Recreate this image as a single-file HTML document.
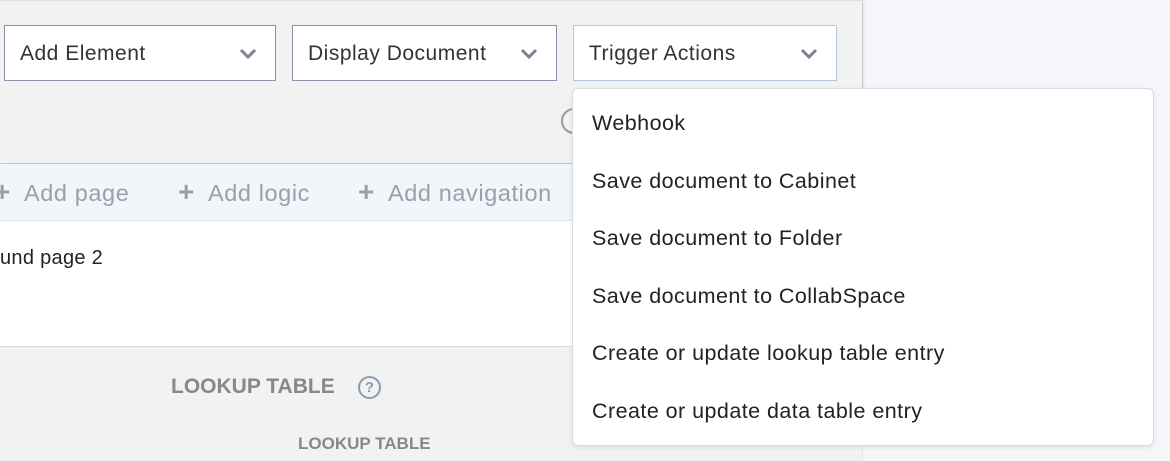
<!DOCTYPE html>
<html><head><style>
body{margin:0;width:1170px;height:461px;overflow:hidden;background:#f4f6f9;font-family:"Liberation Sans",sans-serif;position:relative}
.panel{position:absolute;left:0;top:0;width:862px;height:461px;background:#f2f2f2;border-right:1px solid #e4e6ea}
.top{position:absolute;left:0;top:0;width:862px;height:162px;background:#f2f2f2;border-top:1px solid #e0e0e0;box-shadow:0 2px 4px rgba(0,0,0,.25)}
.dd{position:absolute;top:25px;height:56px;background:#fff;border:1px solid #8e92aa;box-sizing:border-box;font-size:21px;letter-spacing:.5px;color:#333;line-height:56px;padding-left:15px}
.dd svg{position:absolute;right:18px;top:22px}
.bar{position:absolute;left:0;top:164px;width:862px;height:56px;background:#f2f5f9;border-bottom:1px solid #dde2e8;font-size:23.5px;letter-spacing:.6px;color:#9aa0ab;line-height:56px}
.bar span{position:absolute}
.bar b{font-size:28px;margin-right:13px;font-weight:bold}
.white{position:absolute;left:0;top:221px;width:862px;height:125px;background:#fff;border-bottom:1px solid #d6dbe2}
.menu{position:absolute;left:572px;top:88px;width:582px;height:358px;background:#fff;border:1px solid #d8dce2;border-radius:6px;box-sizing:border-box;box-shadow:0 2px 6px rgba(0,0,0,.08)}
.menu div{position:absolute;left:19px;font-size:21.5px;letter-spacing:.45px;color:#222}
</style></head><body>
<div class="panel"></div>
<div class="top"></div>
<div class="dd" style="left:4px;width:272px">Add Element<svg width="18" height="12" viewBox="0 0 18 12"><path d="M2 2l7 7 7-7" stroke="#7d8296" stroke-width="3" fill="none"/></svg></div>
<div class="dd" style="left:292px;width:265px">Display Document<svg width="18" height="12" viewBox="0 0 18 12"><path d="M2 2l7 7 7-7" stroke="#7d8296" stroke-width="3" fill="none"/></svg></div>
<div class="dd" style="left:573px;width:264px;border-color:#b3c7e0">Trigger Actions<svg width="18" height="12" viewBox="0 0 18 12"><path d="M2 2l7 7 7-7" stroke="#7d8296" stroke-width="3" fill="none"/></svg></div>
<div style="position:absolute;left:561px;top:108px;width:26px;height:26px;border:2px solid #999;border-radius:50%;box-sizing:border-box"></div>
<div class="bar"><span style="left:-6px"><b>+</b>Add page</span><span style="left:178px"><b>+</b>Add logic</span><span style="left:358px"><b>+</b>Add navigation</span></div>
<div class="white"><span style="position:absolute;left:0;top:26px;font-size:20px;letter-spacing:.3px;color:#222">und page 2</span></div>
<div style="position:absolute;left:171px;top:375px;font-size:21px;font-weight:bold;color:#888">LOOKUP TABLE</div>
<div style="position:absolute;left:358px;top:376px;width:23px;height:23px;border:2px solid #8a9ab0;border-radius:50%;box-sizing:border-box;color:#8a9ab0;font-size:15px;font-weight:bold;text-align:center;line-height:20px">?</div>
<div style="position:absolute;left:298px;top:434px;font-size:17px;font-weight:bold;color:#888">LOOKUP TABLE</div>
<div class="menu">
<div style="top:22px">Webhook</div>
<div style="top:80px">Save document to Cabinet</div>
<div style="top:137px">Save document to Folder</div>
<div style="top:195px">Save document to CollabSpace</div>
<div style="top:252px">Create or update lookup table entry</div>
<div style="top:310px">Create or update data table entry</div>
</div>
</body></html>
